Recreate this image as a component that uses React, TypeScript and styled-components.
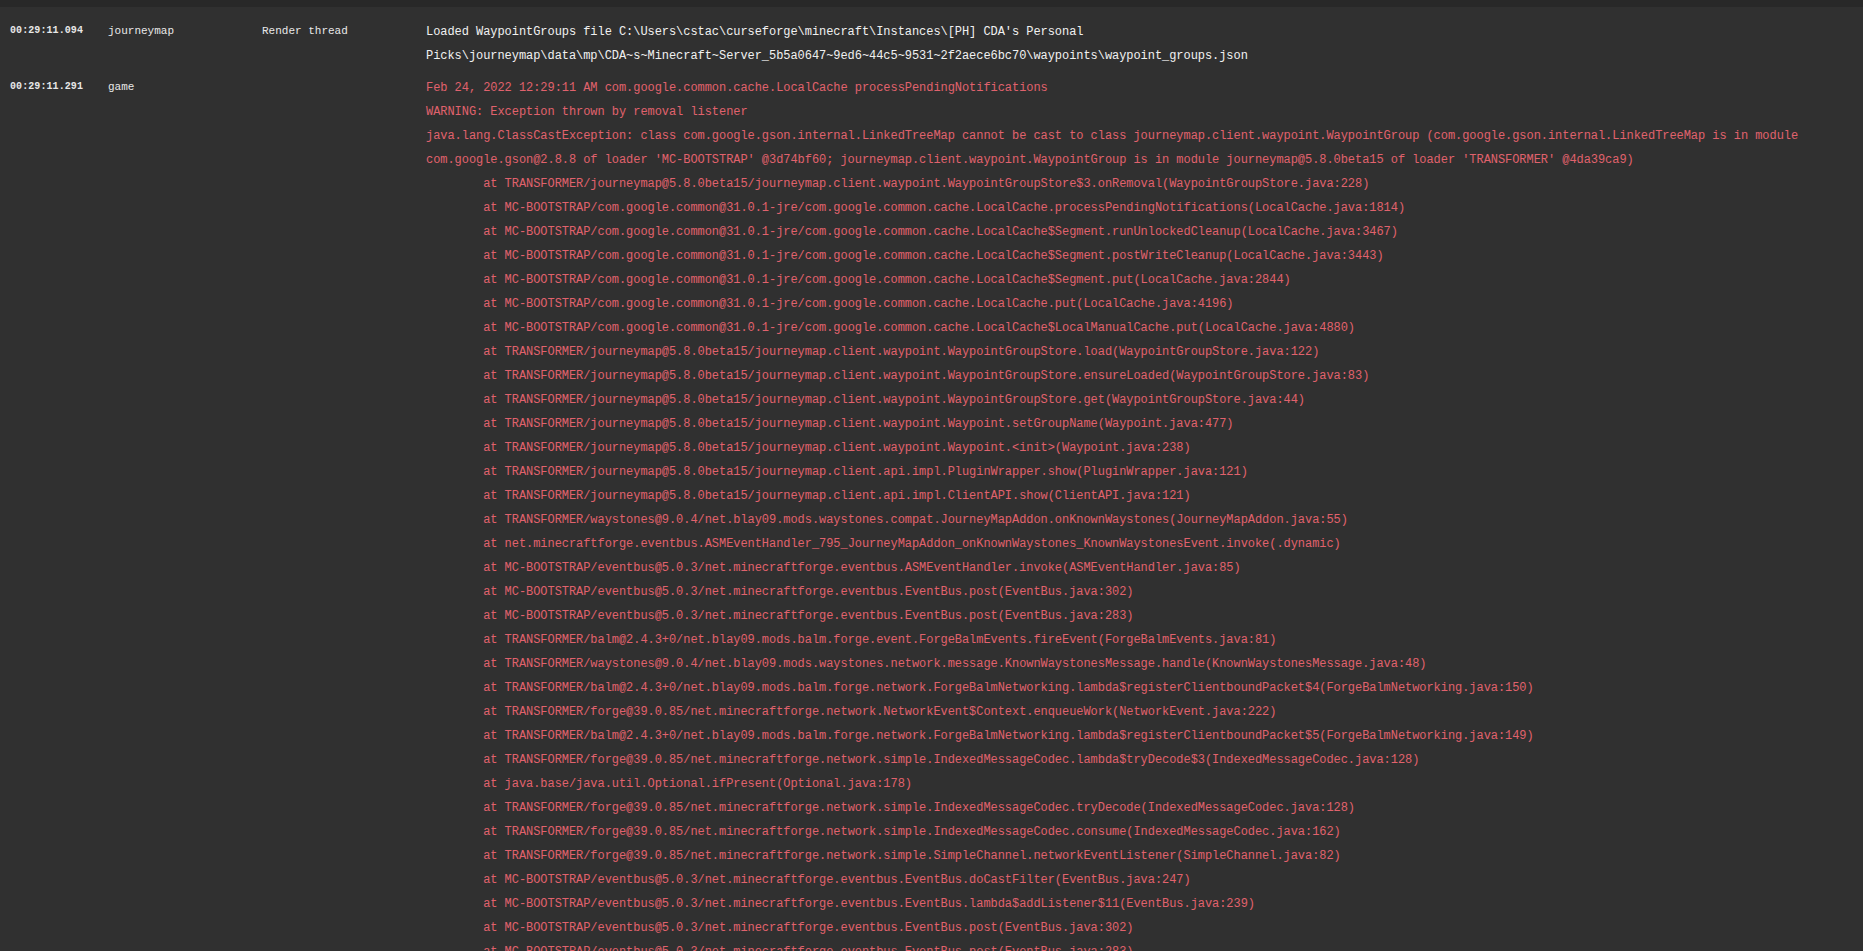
import React from 'react';
import styled, { createGlobalStyle } from 'styled-components';

const GlobalStyle = createGlobalStyle`
  html, body {
    margin: 0;
    height: 100%;
    overflow: hidden;
    background: #303030;
  }
`;

const Page = styled.div`
  height: 951px;
  overflow: hidden;
  background: #303030;
  font-family: 'Liberation Mono', monospace;
`;

const TopBar = styled.div`
  height: 7px;
  background: #282828;
`;

const LogList = styled.div`
  padding-top: 9px;
`;

const LogRow = styled.div`
  display: grid;
  grid-template-columns: 98px 154px 164px 1fr;
  padding: 4px 0 4px 10px;
`;

const Timestamp = styled.div`
  font-size: 10px;
  font-weight: 700;
  line-height: 22px;
  letter-spacing: 0.08px;
  color: #e8e8e8;
`;

const MetaCell = styled.div`
  font-size: 11px;
  line-height: 23px;
  color: #e8e8e8;
`;

const Message = styled.div<{ $error?: boolean }>`
  font-size: 12px;
  line-height: 24px;
  letter-spacing: -0.055px;
  white-space: pre-wrap;
  tab-size: 8;
  color: ${(p) => (p.$error ? '#e0626d' : '#f0f0f0')};
`;

const errorLines = [
  'Feb 24, 2022 12:29:11 AM com.google.common.cache.LocalCache processPendingNotifications',
  'WARNING: Exception thrown by removal listener',
  "java.lang.ClassCastException: class com.google.gson.internal.LinkedTreeMap cannot be cast to class journeymap.client.waypoint.WaypointGroup (com.google.gson.internal.LinkedTreeMap is in module com.google.gson@2.8.8 of loader 'MC-BOOTSTRAP' @3d74bf60; journeymap.client.waypoint.WaypointGroup is in module journeymap@5.8.0beta15 of loader 'TRANSFORMER' @4da39ca9)",
  '\tat TRANSFORMER/journeymap@5.8.0beta15/journeymap.client.waypoint.WaypointGroupStore$3.onRemoval(WaypointGroupStore.java:228)',
  '\tat MC-BOOTSTRAP/com.google.common@31.0.1-jre/com.google.common.cache.LocalCache.processPendingNotifications(LocalCache.java:1814)',
  '\tat MC-BOOTSTRAP/com.google.common@31.0.1-jre/com.google.common.cache.LocalCache$Segment.runUnlockedCleanup(LocalCache.java:3467)',
  '\tat MC-BOOTSTRAP/com.google.common@31.0.1-jre/com.google.common.cache.LocalCache$Segment.postWriteCleanup(LocalCache.java:3443)',
  '\tat MC-BOOTSTRAP/com.google.common@31.0.1-jre/com.google.common.cache.LocalCache$Segment.put(LocalCache.java:2844)',
  '\tat MC-BOOTSTRAP/com.google.common@31.0.1-jre/com.google.common.cache.LocalCache.put(LocalCache.java:4196)',
  '\tat MC-BOOTSTRAP/com.google.common@31.0.1-jre/com.google.common.cache.LocalCache$LocalManualCache.put(LocalCache.java:4880)',
  '\tat TRANSFORMER/journeymap@5.8.0beta15/journeymap.client.waypoint.WaypointGroupStore.load(WaypointGroupStore.java:122)',
  '\tat TRANSFORMER/journeymap@5.8.0beta15/journeymap.client.waypoint.WaypointGroupStore.ensureLoaded(WaypointGroupStore.java:83)',
  '\tat TRANSFORMER/journeymap@5.8.0beta15/journeymap.client.waypoint.WaypointGroupStore.get(WaypointGroupStore.java:44)',
  '\tat TRANSFORMER/journeymap@5.8.0beta15/journeymap.client.waypoint.Waypoint.setGroupName(Waypoint.java:477)',
  '\tat TRANSFORMER/journeymap@5.8.0beta15/journeymap.client.waypoint.Waypoint.<init>(Waypoint.java:238)',
  '\tat TRANSFORMER/journeymap@5.8.0beta15/journeymap.client.api.impl.PluginWrapper.show(PluginWrapper.java:121)',
  '\tat TRANSFORMER/journeymap@5.8.0beta15/journeymap.client.api.impl.ClientAPI.show(ClientAPI.java:121)',
  '\tat TRANSFORMER/waystones@9.0.4/net.blay09.mods.waystones.compat.JourneyMapAddon.onKnownWaystones(JourneyMapAddon.java:55)',
  '\tat net.minecraftforge.eventbus.ASMEventHandler_795_JourneyMapAddon_onKnownWaystones_KnownWaystonesEvent.invoke(.dynamic)',
  '\tat MC-BOOTSTRAP/eventbus@5.0.3/net.minecraftforge.eventbus.ASMEventHandler.invoke(ASMEventHandler.java:85)',
  '\tat MC-BOOTSTRAP/eventbus@5.0.3/net.minecraftforge.eventbus.EventBus.post(EventBus.java:302)',
  '\tat MC-BOOTSTRAP/eventbus@5.0.3/net.minecraftforge.eventbus.EventBus.post(EventBus.java:283)',
  '\tat TRANSFORMER/balm@2.4.3+0/net.blay09.mods.balm.forge.event.ForgeBalmEvents.fireEvent(ForgeBalmEvents.java:81)',
  '\tat TRANSFORMER/waystones@9.0.4/net.blay09.mods.waystones.network.message.KnownWaystonesMessage.handle(KnownWaystonesMessage.java:48)',
  '\tat TRANSFORMER/balm@2.4.3+0/net.blay09.mods.balm.forge.network.ForgeBalmNetworking.lambda$registerClientboundPacket$4(ForgeBalmNetworking.java:150)',
  '\tat TRANSFORMER/forge@39.0.85/net.minecraftforge.network.NetworkEvent$Context.enqueueWork(NetworkEvent.java:222)',
  '\tat TRANSFORMER/balm@2.4.3+0/net.blay09.mods.balm.forge.network.ForgeBalmNetworking.lambda$registerClientboundPacket$5(ForgeBalmNetworking.java:149)',
  '\tat TRANSFORMER/forge@39.0.85/net.minecraftforge.network.simple.IndexedMessageCodec.lambda$tryDecode$3(IndexedMessageCodec.java:128)',
  '\tat java.base/java.util.Optional.ifPresent(Optional.java:178)',
  '\tat TRANSFORMER/forge@39.0.85/net.minecraftforge.network.simple.IndexedMessageCodec.tryDecode(IndexedMessageCodec.java:128)',
  '\tat TRANSFORMER/forge@39.0.85/net.minecraftforge.network.simple.IndexedMessageCodec.consume(IndexedMessageCodec.java:162)',
  '\tat TRANSFORMER/forge@39.0.85/net.minecraftforge.network.simple.SimpleChannel.networkEventListener(SimpleChannel.java:82)',
  '\tat MC-BOOTSTRAP/eventbus@5.0.3/net.minecraftforge.eventbus.EventBus.doCastFilter(EventBus.java:247)',
  '\tat MC-BOOTSTRAP/eventbus@5.0.3/net.minecraftforge.eventbus.EventBus.lambda$addListener$11(EventBus.java:239)',
  '\tat MC-BOOTSTRAP/eventbus@5.0.3/net.minecraftforge.eventbus.EventBus.post(EventBus.java:302)',
  '\tat MC-BOOTSTRAP/eventbus@5.0.3/net.minecraftforge.eventbus.EventBus.post(EventBus.java:283)',
];

const App = () => {
  return (
    <Page>
      <GlobalStyle />
      <TopBar />
      <LogList>
        <LogRow>
          <Timestamp>00:29:11.094</Timestamp>
          <MetaCell>journeymap</MetaCell>
          <MetaCell>Render thread</MetaCell>
          <Message>
            {"Loaded WaypointGroups file C:\\Users\\cstac\\curseforge\\minecraft\\Instances\\[PH] CDA's Personal Picks\\journeymap\\data\\mp\\CDA~s~Minecraft~Server_5b5a0647~9ed6~44c5~9531~2f2aece6bc70\\waypoints\\waypoint_groups.json"}
          </Message>
        </LogRow>
        <LogRow>
          <Timestamp>00:29:11.291</Timestamp>
          <MetaCell>game</MetaCell>
          <MetaCell />
          <Message $error>{errorLines.join('\n')}</Message>
        </LogRow>
      </LogList>
    </Page>
  );
};

export default App;
